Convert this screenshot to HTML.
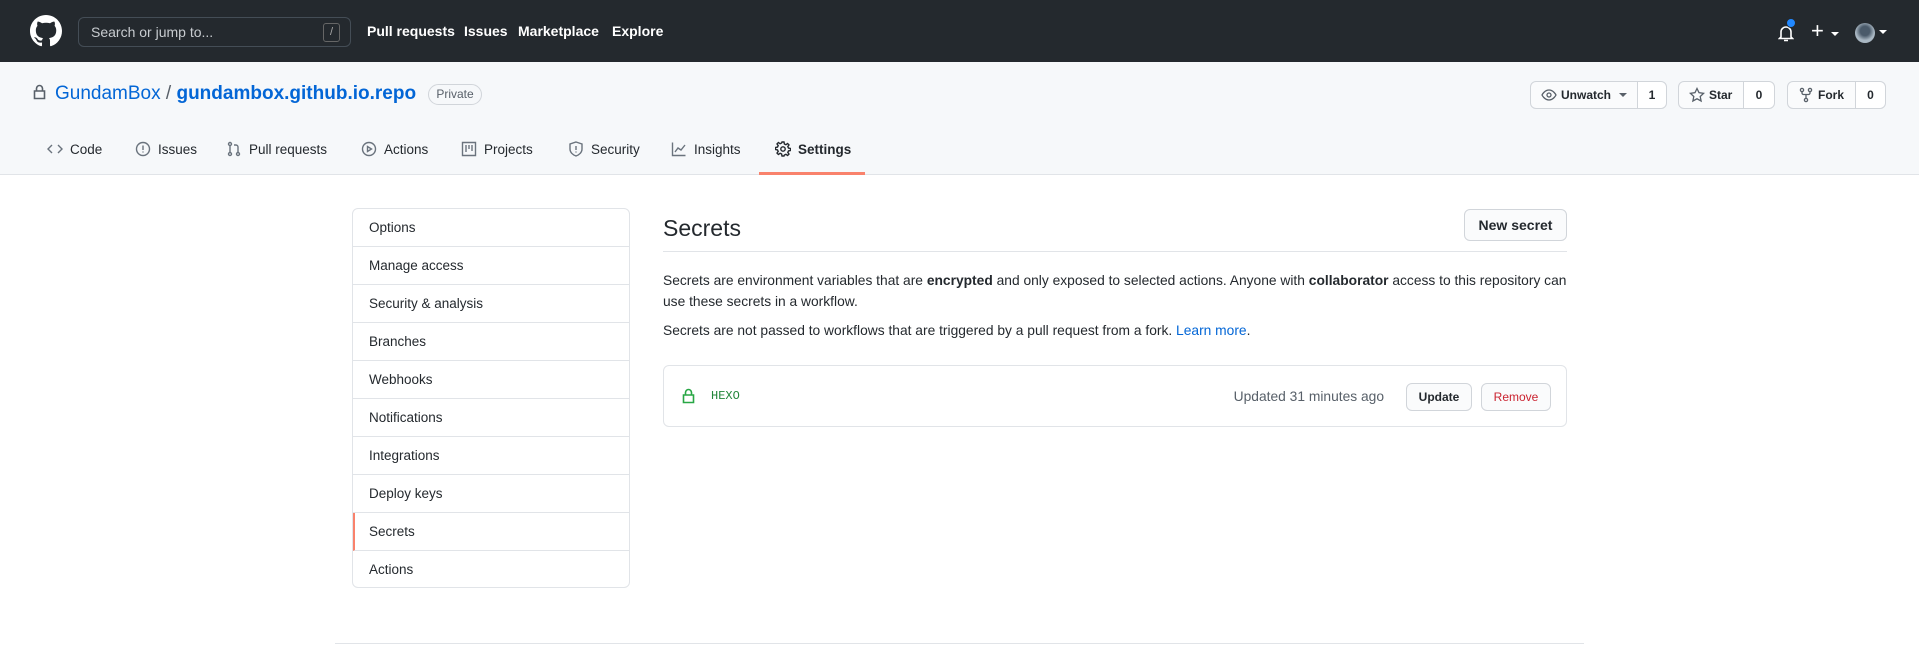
<!DOCTYPE html>
<html><head><meta charset="utf-8"><style>
*{box-sizing:border-box;margin:0;padding:0}
body{width:1919px;height:652px;overflow:hidden;background:#fff;font-family:"Liberation Sans",sans-serif;color:#24292e;font-size:14px;position:relative}
.abs{position:absolute}
.hdr{position:absolute;left:0;top:0;width:1919px;height:62px;background:#24292e}
.hdr .nav{position:absolute;top:23px;color:#fff;font-weight:bold;font-size:14px}
.repo{position:absolute;left:0;top:62px;width:1919px;height:113px;background:#f6f8fa;border-bottom:1px solid #e1e4e8}
.btn{position:absolute;height:28px;border:1px solid #d1d5da;border-radius:6px;background:#fafbfc;font-size:12px;font-weight:bold;display:flex;align-items:center}
.btn .l{display:flex;align-items:center;gap:4px;padding:0 10px;height:100%;border-right:1px solid #d1d5da}
.btn .r{flex:1;text-align:center;background:#fff;height:100%;line-height:26px;border-radius:0 6px 6px 0}
.tab{position:absolute;top:141px;font-size:13.5px;display:flex;align-items:center;gap:7px;color:#24292e}
.tab svg{fill:none;stroke:#6a737d;stroke-width:1.4}
.side{position:absolute;left:352px;top:208px;width:278px;height:380px;border:1px solid #e1e4e8;border-radius:6px;overflow:hidden}
.side div{height:38px;border-bottom:1px solid #e1e4e8;padding-left:16px;line-height:37px;font-size:13.5px}
.side div:last-child{border-bottom:none}
.side .act{border-left:2px solid #f9826c;padding-left:14px}
.b2{position:absolute;border:1px solid #d1d5da;border-radius:6px;background:#fafbfc;font-size:12px;font-weight:bold;text-align:center}
</style></head><body>
<div class="hdr">
<svg class="abs" style="left:30px;top:15px" width="32" height="32" viewBox="0 0 16 16"><path fill="#fff" d="M8 0C3.58 0 0 3.58 0 8c0 3.54 2.29 6.53 5.47 7.59.4.07.55-.17.55-.38 0-.19-.01-.82-.01-1.49-2.01.37-2.53-.49-2.69-.94-.09-.23-.48-.94-.82-1.13-.28-.15-.68-.52-.01-.53.63-.01 1.08.58 1.23.82.72 1.21 1.87.87 2.33.66.07-.52.28-.87.51-1.07-1.78-.2-3.64-.89-3.64-3.95 0-.87.31-1.59.82-2.150-.08-.2-.36-1.02.08-2.12 0 0 .67-.21 2.2.82.64-.18 1.32-.27 2-.27.68 0 1.36.09 2 .27 1.53-1.04 2.2-.82 2.2-.82.44 1.1.16 1.92.08 2.12.51.56.82 1.27.82 2.15 0 3.07-1.87 3.75-3.65 3.95.29.25.54.73.54 1.48 0 1.07-.01 1.93-.01 2.2 0 .21.15.46.55.38A8.013 8.013 0 0016 8c0-4.42-3.58-8-8-8z"/></svg>
<div class="abs" style="left:78px;top:17px;width:273px;height:30px;border:1px solid #444d56;border-radius:6px;color:#c8ccd0;font-size:14px;line-height:28px;padding-left:12px">Search or jump to...</div>
<div class="abs" style="left:323px;top:23px;width:17px;height:19px;border:1px solid #666;border-radius:3px;color:#aaa;font-size:11px;text-align:center;line-height:17px">/</div>
<div class="nav" style="left:367px">Pull requests</div>
<div class="nav" style="left:464px">Issues</div>
<div class="nav" style="left:518px">Marketplace</div>
<div class="nav" style="left:612px">Explore</div>
<svg class="abs" style="left:1778px;top:24px" width="16" height="18" viewBox="0 0 16 18"><path fill="none" stroke="#fff" stroke-width="1.6" d="M3 13V8a5 5 0 0110 0v5l1.5 1.5h-13z M6 16.5h4"/></svg>
<div class="abs" style="left:1786px;top:18px;width:10px;height:10px;border-radius:50%;background:#2188ff;border:1px solid #24292e"></div>
<div class="abs" style="left:1811px;top:18px;color:#fff;font-size:22px">+</div>
<div class="abs" style="left:1831px;top:32px;border:4px solid transparent;border-top-color:#fff"></div>
<div class="abs" style="left:1855px;top:23px;width:20px;height:20px;border-radius:50%;background:radial-gradient(circle at 50% 40%,#4a5a6a 30%,#a9b7c3 60%)"></div>
<div class="abs" style="left:1879px;top:30px;border:4px solid transparent;border-top-color:#fff"></div>
</div>
<div class="repo">
<svg class="abs" style="left:33px;top:22px" width="13" height="16" viewBox="0 0 13 16"><path fill="none" stroke="#586069" stroke-width="1.6" d="M1.5 7h10v7.5h-10z M3.5 7V4.5a3 3 0 016 0V7"/></svg>
<div class="abs" style="left:55px;top:21px;font-size:19px;color:#0366d6;white-space:nowrap">GundamBox <span style="color:#586069">/</span> <b>gundambox.github.io.repo</b></div>
<div class="abs" style="left:428px;top:22px;width:54px;height:21px;border:1px solid #d1d5da;border-radius:11px;font-size:12px;color:#586069;text-align:center;line-height:19px">Private</div>
<div class="btn" style="left:1530px;top:19px;width:137px"><div class="l" style="width:107px"><svg width="16" height="16" viewBox="0 0 16 16"><path fill="none" stroke="#586069" stroke-width="1.3" d="M1 8s2.5-5 7-5 7 5 7 5-2.5 5-7 5-7-5-7-5z"/><circle cx="8" cy="8" r="2" fill="none" stroke="#586069" stroke-width="1.3"/></svg>Unwatch <span style="border:4px solid transparent;border-top-color:#586069;margin:4px 0 0 4px"></span></div><div class="r">1</div></div>
<div class="btn" style="left:1678px;top:19px;width:97px"><div class="l" style="width:65px"><svg width="16" height="16" viewBox="0 0 16 16"><path fill="none" stroke="#586069" stroke-width="1.3" d="M8 1.5l2 4.2 4.6.6-3.4 3.2.9 4.5L8 11.8 3.9 14l.9-4.5L1.4 6.3 6 5.7z"/></svg>Star</div><div class="r">0</div></div>
<div class="btn" style="left:1787px;top:19px;width:99px"><div class="l" style="width:68px"><svg width="16" height="16" viewBox="0 0 16 16"><g fill="none" stroke="#586069" stroke-width="1.3"><circle cx="4" cy="3" r="1.6"/><circle cx="12" cy="3" r="1.6"/><circle cx="8" cy="13" r="1.6"/><path d="M4 4.6V6a1.5 1.5 0 001.5 1.5h5A1.5 1.5 0 0012 6V4.6M8 7.5v4"/></g></svg>Fork</div><div class="r">0</div></div>
</div>
<div class="tab" style="left:47px"><svg width="16" height="16" viewBox="0 0 16 16"><path d="M5 4L1 8l4 4M11 4l4 4-4 4"/></svg>Code</div>
<div class="tab" style="left:135px"><svg width="16" height="16" viewBox="0 0 16 16"><circle cx="8" cy="8" r="6.5"/><path d="M8 4.5v4.5M8 10.5v1"/></svg>Issues</div>
<div class="tab" style="left:226px"><svg width="16" height="16" viewBox="0 0 16 16"><circle cx="4" cy="3" r="1.5"/><circle cx="4" cy="13" r="1.5"/><circle cx="12" cy="13" r="1.5"/><path d="M4 4.5v7M12 11.5V6a2 2 0 00-2-2H8"/></svg>Pull requests</div>
<div class="tab" style="left:361px"><svg width="16" height="16" viewBox="0 0 16 16"><circle cx="8" cy="8" r="6.5"/><path d="M6.5 5.5v5l4-2.5z"/></svg>Actions</div>
<div class="tab" style="left:461px"><svg width="16" height="16" viewBox="0 0 16 16"><path d="M1.5 1.5h13v13h-13zM5 4v7M8 4v4M11 4v6"/></svg>Projects</div>
<div class="tab" style="left:568px"><svg width="16" height="16" viewBox="0 0 16 16"><path d="M8 1l6 2v5c0 3.5-3 6-6 7-3-1-6-3.5-6-7V3z"/><path d="M8 5v4M8 10.5v1"/></svg>Security</div>
<div class="tab" style="left:671px"><svg width="16" height="16" viewBox="0 0 16 16"><path d="M1.5 1.5v13h13M4 11l3-4 3 2 4-5"/></svg>Insights</div>
<div class="tab" style="left:775px;font-weight:bold"><svg width="16" height="16" viewBox="0 0 16 16" style="stroke:#24292e"><circle cx="8" cy="8" r="2.2"/><path d="M7 1h2l.4 2 1.5.7 1.7-1.2 1.4 1.4-1.2 1.7.7 1.5 2 .4v2l-2 .4-.7 1.5 1.2 1.7-1.4 1.4-1.7-1.2-1.5.7L9 15H7l-.4-2-1.5-.7-1.7 1.2L2 12.1l1.2-1.7-.7-1.5L.5 8.5v-2l2-.4.7-1.5L2 2.9 3.4 1.5l1.7 1.2 1.5-.7z"/></svg>Settings</div>
<div class="abs" style="left:759px;top:172px;width:106px;height:3px;background:#f9826c"></div>
<div class="side">
<div>Options</div><div>Manage access</div><div>Security &amp; analysis</div><div>Branches</div><div>Webhooks</div><div>Notifications</div><div>Integrations</div><div>Deploy keys</div><div class="act">Secrets</div><div>Actions</div>
</div>
<div class="abs" style="left:663px;top:215px;font-size:23px">Secrets</div>
<div class="b2" style="left:1464px;top:209px;width:103px;height:32px;font-size:14px;line-height:30px">New secret</div>
<div class="abs" style="left:663px;top:251px;width:904px;height:1px;background:#e1e4e8"></div>
<div class="abs" style="left:663px;top:270px;width:904px;line-height:21px;font-size:13.8px">Secrets are environment variables that are <b>encrypted</b> and only exposed to selected actions. Anyone with <b>collaborator</b> access to this repository can use these secrets in a workflow.</div>
<div class="abs" style="left:663px;top:323px;font-size:13.8px">Secrets are not passed to workflows that are triggered by a pull request from a fork. <span style="color:#0366d6">Learn more</span>.</div>
<div class="abs" style="left:663px;top:365px;width:904px;height:62px;border:1px solid #e1e4e8;border-radius:6px"></div>
<svg class="abs" style="left:682px;top:388px" width="13" height="16" viewBox="0 0 13 16"><path fill="none" stroke="#28a745" stroke-width="1.6" d="M1.5 7h10v7.5h-10z M3.5 7V4.5a3 3 0 016 0V7"/></svg>
<div class="abs" style="left:711px;top:389px;font-family:'Liberation Mono',monospace;font-size:12px;color:#22863a">HEXO</div>
<div class="abs" style="left:1200px;top:389px;width:184px;text-align:right;color:#586069;font-size:13.8px">Updated 31 minutes ago</div>
<div class="b2" style="left:1406px;top:383px;width:66px;height:28px;line-height:26px">Update</div>
<div class="b2" style="left:1481px;top:383px;width:70px;height:28px;line-height:26px;color:#cb2431;font-weight:normal">Remove</div>
<div class="abs" style="left:335px;top:643px;width:1249px;height:1px;background:#e1e4e8"></div>
</body></html>
